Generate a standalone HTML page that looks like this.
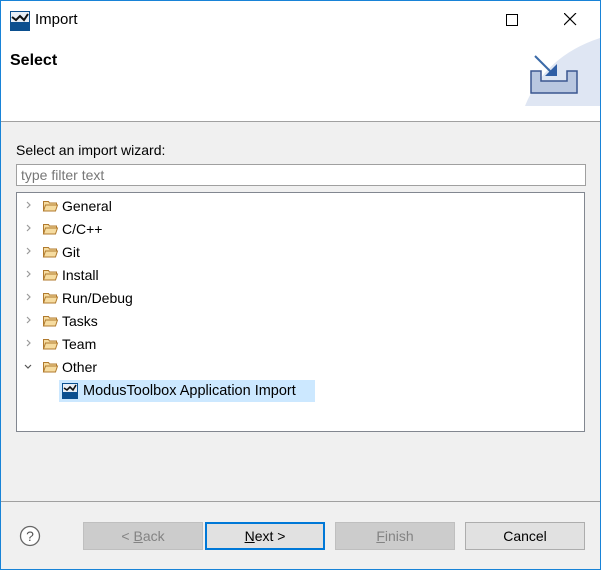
<html><head><style>
body{margin:0;width:601px;height:570px;overflow:hidden;font-family:"Liberation Sans",sans-serif;font-size:14px;}
.win{position:absolute;left:0;top:0;width:599px;height:568px;border:1px solid #1883d7;background:#f0f0f0;}
.hdr{position:absolute;left:0;top:0;width:599px;height:120px;background:#fff;border-bottom:1px solid #a0a0a0;}
.abs{position:absolute;white-space:nowrap;}
.row{position:absolute;left:0;height:22px;line-height:22px;white-space:nowrap;}
.btn{position:absolute;top:521px;width:118px;height:26px;border:1px solid #adadad;background:#e1e1e1;text-align:center;line-height:26px;color:#000;}
.dis{background:#cccccc;border-color:#bfbfbf;color:#838383;}
</style></head><body>
<div class="win">
<div class="hdr">
 <svg class="abs" style="left:9px;top:10px" width="20" height="20"><rect width="20" height="20" fill="#0b4f8f"/><rect x="1" y="1" width="18" height="10" fill="#e8eef5"/><path d="M2 6 L6 9 L10 5 L14 9 L18 3" stroke="#111" stroke-width="2" fill="none"/></svg>
 <div class="abs" style="left:34px;top:10px;font-size:15px;color:#000">Import</div>
 <div class="abs" style="left:505px;top:13px;width:10px;height:10px;border:1px solid #000"></div>
 <svg class="abs" style="left:563px;top:12px" width="13" height="13"><path d="M0 0L12 12M12 0L0 12" stroke="#000" stroke-width="1.2"/></svg>
 <div class="abs" style="left:9px;top:51px;font-weight:bold;font-size:16px">Select</div>
 <svg class="abs" style="left:524px;top:35px" width="75" height="70"><path d="M75 2 Q20 20 0 70 L75 70Z" fill="#dfe6f3"/><path d="M6 35 H16 V45 H42 V35 H52 V57 H6Z" fill="#b9c7e0" stroke="#3a5690" stroke-width="1.5"/><path d="M10 20 L27 37" stroke="#3a6aa8" stroke-width="2"/><path d="M20 40 L32 40 L32 28Z" fill="#2f5ea5"/></svg>
</div>
<div class="abs" style="left:15px;top:141px">Select an import wizard:</div>
<div class="abs" style="left:15px;top:163px;width:564px;height:20px;border:1px solid #a0a0a0;background:#fff;color:#777;line-height:20px;padding-left:4px">type filter text</div>
<div class="abs" style="left:15px;top:191px;width:567px;height:238px;border:1px solid #828790;background:#fff"></div>
<div class="abs" style="left:16px;top:192px">
 <svg class="abs" style="left:0;top:0" width="300" height="185">
  <g fill="none" stroke="#9a9a9a" stroke-width="1.2">
   <path d="M10 9 l3 3 l-3 3"/><path d="M10 32 l3 3 l-3 3"/><path d="M10 55 l3 3 l-3 3"/><path d="M10 78 l3 3 l-3 3"/><path d="M10 101 l3 3 l-3 3"/><path d="M10 124 l3 3 l-3 3"/><path d="M10 147 l3 3 l-3 3"/><path d="M8 172 l3 3 l3 -3" stroke="#555"/>
  </g>
  <g fill="#f6dca0" stroke="#b07a2e" stroke-width="1">
   <path d="M26.5 8.5 h5 l1 1.5 h7 v2 h-11 l-2 6z M26.5 18 l2-6 h12 l-2 6z"/>
   <path d="M26.5 31.5 h5 l1 1.5 h7 v2 h-11 l-2 6z M26.5 41 l2-6 h12 l-2 6z"/>
   <path d="M26.5 54.5 h5 l1 1.5 h7 v2 h-11 l-2 6z M26.5 64 l2-6 h12 l-2 6z"/>
   <path d="M26.5 77.5 h5 l1 1.5 h7 v2 h-11 l-2 6z M26.5 87 l2-6 h12 l-2 6z"/>
   <path d="M26.5 100.5 h5 l1 1.5 h7 v2 h-11 l-2 6z M26.5 110 l2-6 h12 l-2 6z"/>
   <path d="M26.5 123.5 h5 l1 1.5 h7 v2 h-11 l-2 6z M26.5 133 l2-6 h12 l-2 6z"/>
   <path d="M26.5 146.5 h5 l1 1.5 h7 v2 h-11 l-2 6z M26.5 156 l2-6 h12 l-2 6z"/>
   <path d="M26.5 169.5 h5 l1 1.5 h7 v2 h-11 l-2 6z M26.5 179 l2-6 h12 l-2 6z"/>
  </g>
 </svg>
 <div class="row" style="left:45px;top:2px">General</div>
 <div class="row" style="left:45px;top:25px">C/C++</div>
 <div class="row" style="left:45px;top:48px">Git</div>
 <div class="row" style="left:45px;top:71px">Install</div>
 <div class="row" style="left:45px;top:94px">Run/Debug</div>
 <div class="row" style="left:45px;top:117px">Tasks</div>
 <div class="row" style="left:45px;top:140px">Team</div>
 <div class="row" style="left:45px;top:163px">Other</div>
 <div class="abs" style="left:42px;top:187px;width:256px;height:22px;background:#cce8ff"></div>
 <svg class="abs" style="left:45px;top:190px" width="16" height="16"><rect width="16" height="16" fill="#0b4f8f"/><rect x="1" y="1" width="14" height="8" fill="#e8eef5"/><path d="M2 5 L5 7 L8 4 L11 7 L14 2" stroke="#111" stroke-width="1.6" fill="none"/></svg>
 <div class="row" style="left:66px;top:187px;font-size:14.5px">ModusToolbox Application Import</div>
</div>
<div class="abs" style="left:0;top:500px;width:599px;height:1px;background:#a0a0a0"></div>
<svg class="abs" style="left:18px;top:524px" width="22" height="22"><circle cx="11" cy="11" r="9.5" fill="#fff" stroke="#666" stroke-width="1.3"/><text x="11" y="16" font-size="14" font-family="Liberation Sans" text-anchor="middle" fill="#555">?</text></svg>
<div class="btn dis" style="left:82px">&lt; <u>B</u>ack</div>
<div class="btn" style="left:204px;border:2px solid #0078d7;width:116px;height:24px;line-height:24px"><u>N</u>ext &gt;</div>
<div class="btn dis" style="left:334px"><u>F</u>inish</div>
<div class="btn" style="left:464px">Cancel</div>
</div>
</body></html>
